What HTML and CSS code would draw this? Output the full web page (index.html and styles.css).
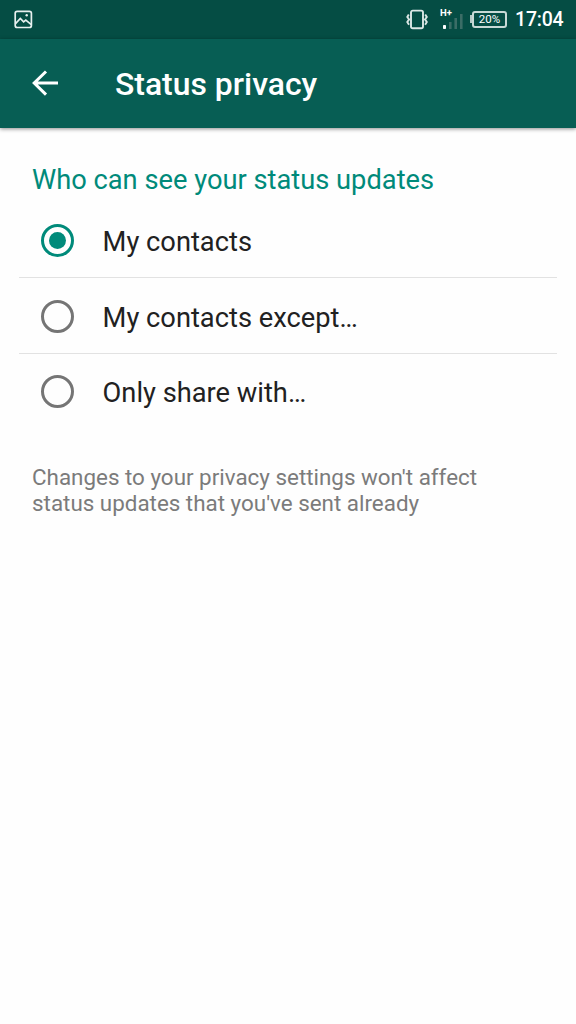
FILE: index.html
```html
<!DOCTYPE html>
<html lang="en">
<head>
<meta charset="utf-8">
<title>Status privacy</title>
<link rel="stylesheet" href="styles.css">
</head>
<body>
<div class="statusbar">
  <svg class="picture" width="20" height="20" viewBox="0 0 20 20" fill="none" stroke="#e8f0ef" stroke-width="1.7">
    <rect x="2.2" y="1.3" width="16.2" height="16.2" rx="2"/>
    <path d="M2.3 13.8 7.3 8.4l3.3 3.4 2.2-1.8 5.5 4.6"/>
    <circle cx="13.7" cy="5.3" r="1.2" fill="#e8f0ef" stroke="none"/>
  </svg>
  <svg class="vibrate" width="22" height="22" viewBox="0 0 22 22" fill="none" stroke="#dce8e6" stroke-width="1.9">
    <rect x="5" y="1.6" width="12" height="17.6" rx="1.8"/>
    <path d="M2.8 5.5 1.3 8l1.8 2.4-1.8 2.6 1.7 2.7M19.2 5.5 20.8 8 19 10.4l1.8 2.6-1.7 2.7"/>
  </svg>
  <div class="signal">
    <span class="network">H+</span>
    <svg class="bars" width="20" height="17" viewBox="0 0 20 17" fill="#3b6d66">
      <rect x="0" y="12" width="3" height="4" rx=".8" fill="#fff"/>
      <rect x="6" y="9" width="2.6" height="7"/>
      <rect x="11.4" y="5" width="2.6" height="11"/>
      <rect x="17" y="1" width="2.6" height="15"/>
    </svg>
  </div>
  <div class="battery"><span class="level">20%</span></div>
  <span class="clock">17:04</span>
</div>
<header class="appbar">
  <svg class="back" width="28" height="28" viewBox="0 0 28 28" fill="none" stroke="#fff" stroke-width="3">
    <path d="M27 14H3.5M15 2.5 3.2 14 15 25.6"/>
  </svg>
  <h1 class="title">Status privacy</h1>
</header>
<main class="content">
  <h2 class="heading">Who can see your status updates</h2>
  <div class="options">
    <div class="option"><span class="radio checked"></span><span class="label">My contacts</span></div>
    <div class="option"><span class="radio"></span><span class="label">My contacts except…</span></div>
    <div class="option"><span class="radio"></span><span class="label">Only share with…</span></div>
  </div>
  <p class="note">Changes to your privacy settings won't affect<br>status updates that you've sent already</p>
</main>
</body>
</html>
```
FILE: styles.css
```css
* { box-sizing: border-box; }
body {
  margin: 0;
  min-height: 1024px;
  background: #fefefe;
  font-family: Roboto, sans-serif;
  color: #212121;
}
.statusbar {
  display: flex;
  align-items: center;
  height: 39px;
  padding: 0 12px 0 13px;
  background: #054d44;
  color: #fff;
}
.vibrate { margin-left: auto; }
.signal {
  width: 24px;
  height: 24px;
  margin-left: 12px;
  display: flex;
  flex-direction: column;
}
.network {
  height: 7px;
  font-size: 9.5px;
  line-height: 9px;
  font-weight: 700;
}
.bars { margin-left: 3px; margin-top: -2px; }
.battery {
  display: flex;
  align-items: center;
  margin: -1px 0 0 6px;
}
.battery::before {
  content: "";
  width: 2px;
  height: 8px;
  background: #b4cac7;
}
.level {
  width: 35px;
  height: 17px;
  border: 2px solid #c8d9d6;
  border-radius: 3px;
  font-size: 11.5px;
  line-height: 13px;
  text-align: center;
}
.clock {
  width: 49px;
  margin-left: 8px;
  padding-top: 1px;
  font-size: 19.5px;
  font-weight: 500;
  line-height: 24px;
  letter-spacing: -.2px;
}
.appbar {
  display: flex;
  align-items: center;
  height: 89px;
  padding-left: 31px;
  background: #075e54;
  box-shadow: 0 1px 4px rgba(0, 0, 0, .45);
}
.back { margin-top: -1px; }
.title {
  margin: 1px 0 1px 56px;
  font-size: 31.9px;
  font-weight: 500;
  line-height: 40px;
  color: #fff;
}
.content { padding: 36px 19px 0; }
.heading {
  margin: 0 13px 6px;
  font-size: 27.27px;
  font-weight: 400;
  line-height: 32px;
  color: #008a7a;
}
.option {
  display: flex;
  align-items: center;
  height: 76px;
  padding-left: 22px;
  border-bottom: 1px solid #e2e2e2;
}
.option:last-child {
  height: 75px;
  border-bottom: 0;
}
.radio {
  display: grid;
  place-items: center;
  width: 33px;
  height: 33px;
  margin-top: 1px;
  border: 3.2px solid #757575;
  border-radius: 50%;
}
.option:last-child .radio { margin-top: 0; }
.checked { border-color: #008a7a; }
.checked::before {
  content: "";
  width: 17px;
  height: 17px;
  border-radius: 50%;
  background: #008a7a;
}
.label {
  margin-left: 28.6px;
  padding-top: 4px;
  font-size: 27.27px;
  line-height: 32px;
}
.option:last-child .label { padding-top: 3px; }
.note {
  margin: 35px 13px 0;
  font-size: 22.4px;
  line-height: 26px;
  color: #7b7b7b;
}
```
